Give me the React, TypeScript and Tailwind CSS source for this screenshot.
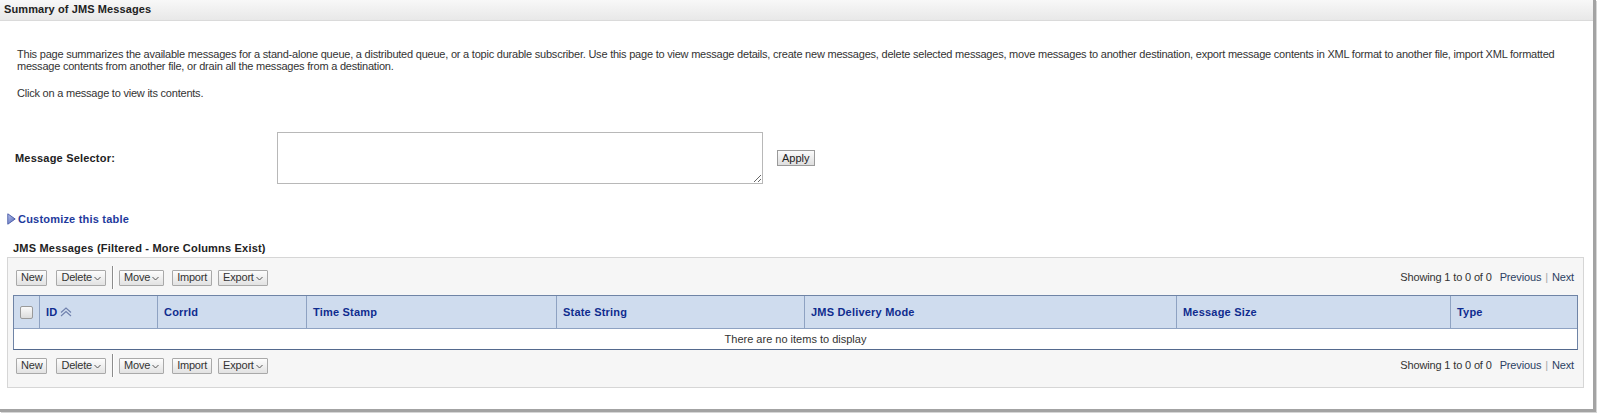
import React from "react";

const Chevron = () => (
  <svg width="7" height="5" viewBox="0 0 7 5" className="ml-[2px] mt-[1px]">
    <path d="M0.5 1 L3.5 4 L6.5 1" fill="none" stroke="#555" strokeWidth="1" />
  </svg>
);

const Btn = ({ label, menu }: { label: string; menu?: boolean }) => (
  <div className="flex items-center h-[16px] px-[4px] border border-[#a9a9a9] bg-gradient-to-b from-[#fdfdfd] to-[#e2e2e2] text-[11px] leading-none text-[#333] rounded-[1px] tracking-[-0.2px]">
    <span>{label}</span>
    {menu && <Chevron />}
  </div>
);

const Toolbar = () => (
  <div className="flex items-center justify-between h-[23px] pl-[3px] pr-[4px]">
    <div className="flex items-center">
      <Btn label="New" />
      <div className="ml-[9px]">
        <Btn label="Delete" menu />
      </div>
      <div className="ml-[6px] mr-[5px] w-[2px] h-[23px] border-l border-[#8c8c8c] border-r border-r-[#ffffff]" />
      <Btn label="Move" menu />
      <div className="ml-[8px]">
        <Btn label="Import" />
      </div>
      <div className="ml-[6px]">
        <Btn label="Export" menu />
      </div>
    </div>
    <div className="flex items-center text-[11px] text-[#333] tracking-[-0.15px]">
      <span>Showing 1 to 0 of 0</span>
      <span className="ml-[8px] text-[#2c3f63]">Previous</span>
      <span className="mx-[4px] text-[#a8a8a8]">|</span>
      <span className="text-[#2c3f63]">Next</span>
    </div>
  </div>
);

const cols: { label: string; w: string; sort?: boolean }[] = [
  { label: "ID", w: "w-[118px]", sort: true },
  { label: "CorrId", w: "w-[149px]" },
  { label: "Time Stamp", w: "w-[250px]" },
  { label: "State String", w: "w-[248px]" },
  { label: "JMS Delivery Mode", w: "w-[372px]" },
  { label: "Message Size", w: "w-[274px]" },
  { label: "Type", w: "flex-1" },
];

export default function App() {
  return (
    <div className="w-[1600px] h-[416px] bg-white font-['Liberation_Sans',Arial,sans-serif] text-[11px] text-[#222]">
      <div className="w-[1596px] h-[412px] border-r-[3px] border-b-[3px] border-[#a3a3a3] shadow-[1px_1px_0_#d6d6d6] bg-white flex flex-col">
        <div className="h-[21px] shrink-0 flex items-center pl-[4px] pb-[2px] bg-gradient-to-b from-[#f8f8f8] to-[#e8e8e8] border-b border-[#dadada] font-bold text-[#222] tracking-[0.1px]">
          Summary of JMS Messages
        </div>

        <div className="pl-[17px] mt-[27px] leading-[12px] text-[#333] tracking-[-0.22px]">
          <div className="whitespace-nowrap">
            This page summarizes the available messages for a stand-alone queue, a distributed queue, or a topic durable subscriber. Use this page to view message details, create new messages, delete selected messages, move messages to another destination, export message contents in XML format to another file, import XML formatted
          </div>
          <div className="whitespace-nowrap">message contents from another file, or drain all the messages from a destination.</div>
        </div>
        <div className="pl-[17px] mt-[15px] leading-[12px] text-[#333] tracking-[-0.22px]">Click on a message to view its contents.</div>

        <div className="flex items-center mt-[33px] pl-[15px]">
          <div className="w-[262px] font-bold text-[#222] tracking-[0.2px]">Message Selector:</div>
          <textarea className="w-[486px] h-[52px] border border-[#b8b8b8] bg-white resize" />
          <div className="ml-[14px] flex items-center h-[16px] px-[4px] border border-[#9a9a9a] bg-gradient-to-b from-[#fbfbfb] to-[#dedede] text-[11px] leading-none text-[#222]">
            Apply
          </div>
        </div>

        <div className="flex items-center mt-[29px] pl-[7px] h-[12px]">
          <svg width="9" height="12" viewBox="0 0 9 12">
            <defs>
              <linearGradient id="tri" x1="0" y1="0" x2="1" y2="1">
                <stop offset="0" stopColor="#b9c4ee" />
                <stop offset="1" stopColor="#4d61b4" />
              </linearGradient>
            </defs>
            <path d="M0.8 0.8 L8.2 6 L0.8 11.2 Z" fill="url(#tri)" stroke="#5062ac" strokeWidth="1" />
          </svg>
          <span className="ml-[2px] font-bold text-[#1e3a9c] tracking-[0.2px]">Customize this table</span>
        </div>

        <div className="pl-[13px] mt-[17px] h-[12px] leading-[12px] font-bold text-[#222] tracking-[0.2px]">
          JMS Messages (Filtered - More Columns Exist)
        </div>

        <div className="ml-[7px] mt-[3px] w-[1577px] border border-[#d6d6d6] bg-[#f6f6f6] px-[5px] pt-[8px] pb-[10px]">
          <Toolbar />
          <div className="mt-[6px] border border-[#6f84a6] border-b-[#53698d]">
            <div className="flex h-[33px] bg-[#cfdcee] border-b border-[#8ea2c2]">
              <div className="w-[26px] flex items-center justify-center border-r border-[#8ea2c2]">
                <div className="w-[13px] h-[13px] rounded-[2px] border border-[#9a9a9a] bg-gradient-to-b from-[#fafafa] to-[#dcdcdc]" />
              </div>
              {cols.map((c, i) => (
                <div
                  key={c.label}
                  className={`${c.w} flex items-center pl-[6px] font-bold text-[#0f2c8e] tracking-[0.2px] ${i < cols.length - 1 ? "border-r border-[#8ea2c2]" : ""}`}
                >
                  <span>{c.label}</span>
                  {c.sort && (
                    <svg width="12" height="10" viewBox="0 0 12 10" className="ml-[3px]">
                      <path d="M1 5.5 L6 1 L11 5.5" fill="none" stroke="#6f80ad" strokeWidth="1.1" />
                      <path d="M1 9 L6 4.5 L11 9" fill="none" stroke="#6f80ad" strokeWidth="1.1" />
                    </svg>
                  )}
                </div>
              ))}
            </div>
            <div className="h-[20px] bg-white flex items-center justify-center text-[#333]">There are no items to display</div>
          </div>
          <div className="mt-[4px]">
            <Toolbar />
          </div>
        </div>
      </div>
    </div>
  );
}
